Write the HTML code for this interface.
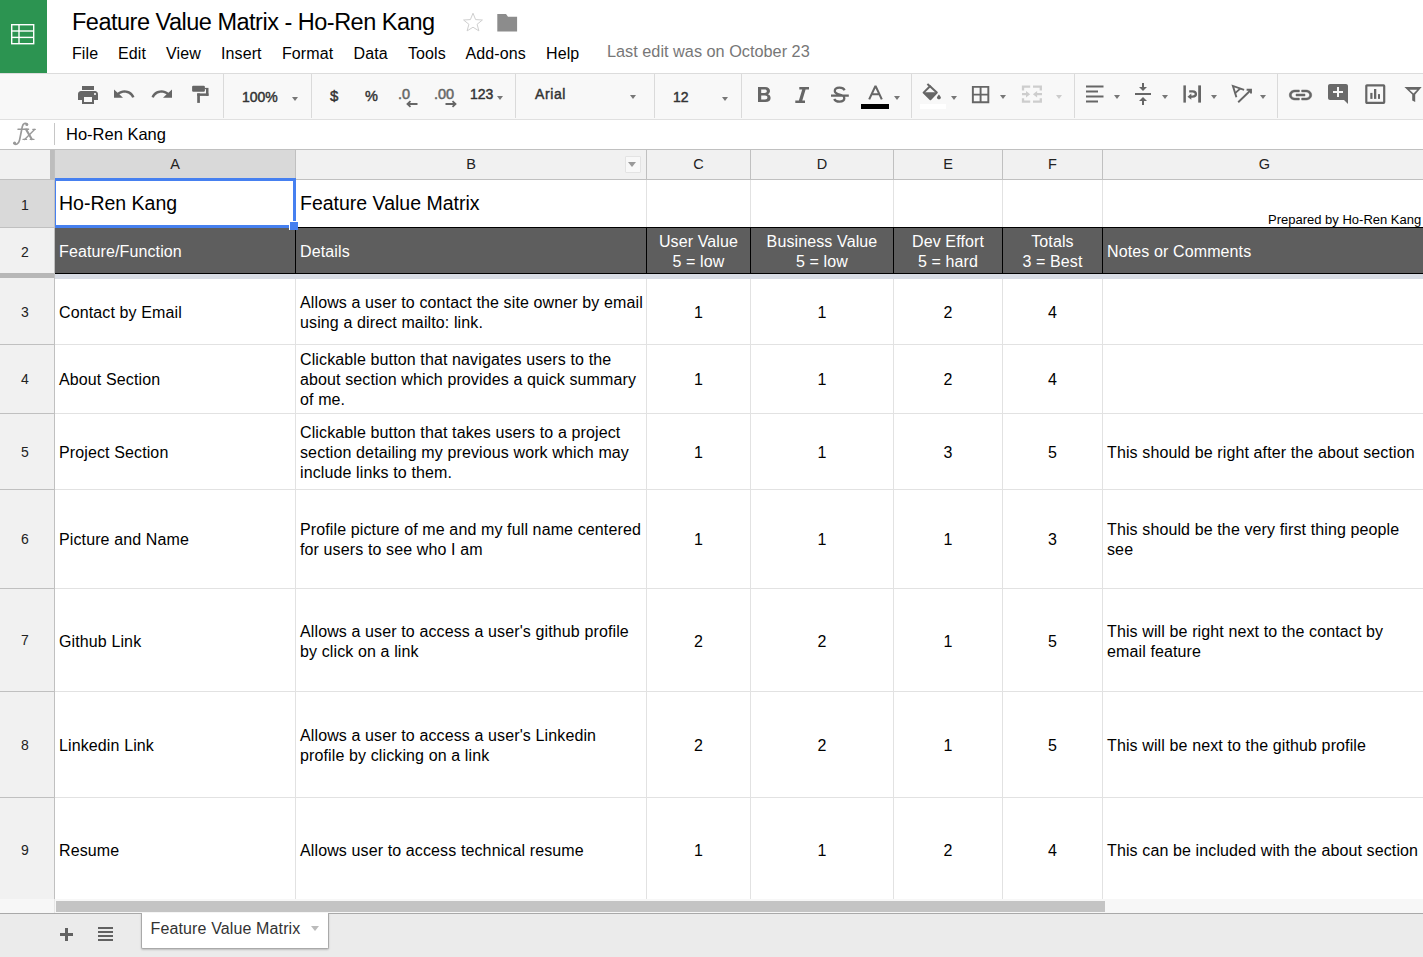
<!DOCTYPE html>
<html><head><meta charset="utf-8">
<style>
*{box-sizing:border-box;margin:0;padding:0}
html,body{width:1423px;height:957px;overflow:hidden;background:#fff;font-family:"Liberation Sans",sans-serif;color:#000}
.a{position:absolute;white-space:nowrap}
svg{position:absolute;overflow:visible}
#logo{left:0;top:0;width:47px;height:73px;background:#2c9451}
#title{left:72px;top:7px;font-size:23.5px;line-height:30px;color:#000;letter-spacing:-0.5px}
.menu{top:44px;letter-spacing:0.1px;font-size:16px;line-height:20px;color:#000}
#lastedit{left:607px;top:41px;font-size:16.3px;line-height:20px;color:#777}
#toolbar{left:0;top:73px;width:1423px;height:47px;background:#f8f8f8;border-top:1px solid #dcdcdc;border-bottom:1px solid #e0e0e0}
.sep{top:74px;width:1px;height:44px;background:#dadada}
.tt{font-size:14px;font-weight:normal;-webkit-text-stroke:0.45px #333;color:#333;line-height:16px}
.tr{font-size:14.5px;color:#666;line-height:16px;font-weight:bold}
.dd{position:absolute;width:0;height:0;border-left:3.5px solid transparent;border-right:3.5px solid transparent;border-top:4px solid #777}
#fbar{left:0;top:120px;width:1423px;height:30px;background:#fff;border-bottom:1px solid #c0c0c0}
.hdr{background:#f1f1f1}
.ch{font-size:14.5px;line-height:16px;color:#222;text-align:center}
.rh{font-size:14px;line-height:16px;color:#222;text-align:center}
.c{position:absolute;display:flex;align-items:center;font-size:16px;line-height:20px;white-space:nowrap;padding-left:4px;padding-top:2px;overflow:hidden;letter-spacing:0.12px}
.cc{justify-content:center;text-align:center;padding-left:0}
.dk{color:#fff}
.hl{position:absolute;height:1px}
.vl{position:absolute;width:1px}
</style></head><body>
<div class="a" id="logo"><svg width="47" height="73" style="left:0;top:0"><g fill="none" stroke="#fff" stroke-width="1.4"><rect x="11.7" y="24.7" width="22" height="19"/><line x1="19" y1="24.7" x2="19" y2="43.7"/><line x1="11.7" y1="31" x2="33.7" y2="31"/><line x1="11.7" y1="37.4" x2="33.7" y2="37.4"/></g></svg></div>
<div class="a" id="title">Feature Value Matrix - Ho-Ren Kang</div>
<svg style="left:462px;top:12px" width="22" height="21" viewBox="0 0 22 21"><path d="M11 1.2 L13.6 7.6 L20.4 8 L15.1 12.3 L16.9 18.9 L11 15.2 L5.1 18.9 L6.9 12.3 L1.6 8 L8.4 7.6 Z" fill="none" stroke="#cfcfcf" stroke-width="1"/></svg>
<svg style="left:497px;top:14px" width="21" height="18" viewBox="0 0 21 18"><path d="M0.3 0 H9 L11 2.7 H20.1 V17.6 H0.3 Z" fill="#8c8c8c"/></svg>
<div class="a menu" style="left:72px">File</div>
<div class="a menu" style="left:118px">Edit</div>
<div class="a menu" style="left:166px">View</div>
<div class="a menu" style="left:221px">Insert</div>
<div class="a menu" style="left:282px">Format</div>
<div class="a menu" style="left:353.5px">Data</div>
<div class="a menu" style="left:408px">Tools</div>
<div class="a menu" style="left:465.5px">Add-ons</div>
<div class="a menu" style="left:546px">Help</div>
<div class="a" id="lastedit">Last edit was on October 23</div>
<div class="a" id="toolbar"></div>
<div class="a sep" style="left:223px"></div>
<div class="a sep" style="left:311px"></div>
<div class="a sep" style="left:515px"></div>
<div class="a sep" style="left:654px"></div>
<div class="a sep" style="left:741px"></div>
<div class="a sep" style="left:911px"></div>
<div class="a sep" style="left:1074px"></div>
<div class="a sep" style="left:1277px"></div>
<!-- print -->
<svg style="left:76px;top:83px" width="24" height="24" viewBox="0 0 24 24"><path fill="#666" d="M19 8H5c-1.66 0-3 1.34-3 3v6h4v4h12v-4h4v-6c0-1.66-1.34-3-3-3zm-3 11H8v-5h8v5zm3-7c-.55 0-1-.45-1-1s.45-1 1-1 1 .45 1 1-.45 1-1 1zm-1-9H6v4h12V3z"/></svg>
<!-- undo -->
<svg style="left:112px;top:83px" width="24" height="22" viewBox="0 0 24 24" preserveAspectRatio="none"><path fill="#666" d="M12.5 8c-2.65 0-5.05.99-6.9 2.6L2 7v9h9l-3.62-3.62c1.39-1.16 3.16-1.88 5.12-1.88 3.54 0 6.55 2.31 7.6 5.5l2.37-.78C21.08 11.03 17.15 8 12.5 8z"/></svg>
<!-- redo -->
<svg style="left:150px;top:83px" width="24" height="22" viewBox="0 0 24 24" preserveAspectRatio="none"><path fill="#666" d="M18.4 10.6C16.55 8.99 14.15 8 11.5 8c-4.65 0-8.58 3.03-9.96 7.22L3.9 16c1.05-3.19 4.05-5.5 7.6-5.5 1.95 0 3.73.72 5.12 1.88L13 16h9V7l-3.6 3.6z"/></svg>
<!-- paint format -->
<svg style="left:188px;top:84px" width="24" height="22" viewBox="0 0 24 22"><g fill="#666"><rect x="4.1" y="1.7" width="12.8" height="6" rx="1.2"/><rect x="16.4" y="3.9" width="2" height="1.3"/><rect x="18" y="3.9" width="2.5" height="7.9"/><rect x="9.2" y="9.4" width="11.3" height="2.5"/><rect x="9.2" y="9.4" width="2.7" height="9.5"/></g></svg>
<div class="a tt" style="left:242px;top:89px">100%</div>
<div class="dd" style="left:292px;top:97px"></div>
<div class="a tt" style="left:330px;top:88px;font-size:15px">$</div>
<div class="a tt" style="left:365px;top:88px;font-size:14.5px">%</div>
<!-- .0 with left arrow -->
<div class="a tr" style="left:398px;top:86px;font-weight:normal;-webkit-text-stroke:0.5px #666">.0</div>
<svg style="left:405px;top:100px" width="14" height="8" viewBox="0 0 14 8"><path d="M12.5 4H3 M5.5 1.2 L2.5 4 L5.5 6.8" fill="none" stroke="#666" stroke-width="1.8"/></svg>
<div class="a tr" style="left:434px;top:86px;font-weight:normal;-webkit-text-stroke:0.5px #666">.00</div>
<svg style="left:444px;top:100px" width="14" height="8" viewBox="0 0 14 8"><path d="M1.5 4H11 M8.5 1.2 L11.5 4 L8.5 6.8" fill="none" stroke="#666" stroke-width="1.8"/></svg>
<div class="a tt" style="left:470px;top:86px">123</div>
<div class="dd" style="left:497px;top:96px"></div>
<div class="a tt" style="left:535px;top:86px;letter-spacing:0.6px">Arial</div>
<div class="dd" style="left:630px;top:95px"></div>
<div class="a tt" style="left:673px;top:89px">12</div>
<div class="dd" style="left:722px;top:97px"></div>
<!-- B I S -->
<svg style="left:758px;top:87px" width="13" height="15" viewBox="0 0 13 15"><path fill="#666" fill-rule="evenodd" d="M0 0H7C10.5 0 12 1.8 12 4 12 5.6 11 6.7 9.8 7.2 11.5 7.7 12.6 9 12.6 10.9 12.6 13.4 10.8 15 7.5 15H0Z M3.2 2.6V6H6.6C8 6 8.8 5.4 8.8 4.3 8.8 3.2 8 2.6 6.6 2.6Z M3.2 8.6V12.4H7C8.5 12.4 9.4 11.7 9.4 10.5 9.4 9.3 8.5 8.6 7 8.6Z"/></svg>
<svg style="left:794px;top:87px" width="16" height="16" viewBox="0 0 16 16"><path fill="#666" d="M5.3 0H15V2.6H11.6L8.3 13.4H11V16H1.3V13.4H4.9L8.2 2.6H5.3Z"/></svg>
<svg style="left:830px;top:86px" width="19" height="17" viewBox="0 0 19 17"><path fill="none" stroke="#666" stroke-width="2.3" d="M14.6 4.2C13.8 2.5 12 1.6 9.5 1.6 6.7 1.6 4.8 2.9 4.8 5 4.8 7.2 7 7.9 9.6 8.5 12.3 9.1 14.3 10 14.3 12.3 14.3 14.4 12.3 15.6 9.5 15.6 6.9 15.6 5 14.6 4.2 12.9 M1 9.6H18.8"/></svg>
<!-- text color A -->
<svg style="left:868px;top:84.5px" width="15" height="15" viewBox="0 0 15 15"><path fill="none" stroke="#666" stroke-width="2.1" stroke-linejoin="bevel" d="M1.2 14.4L7.5 0.9 13.8 14.4 M3.8 9.2H11.2"/></svg>
<div class="a" style="left:861px;top:104px;width:28px;height:5px;background:#000"></div>
<div class="dd" style="left:894px;top:96px"></div>
<!-- fill color -->
<svg style="left:920px;top:82px" width="24" height="20" viewBox="0 0 24 20"><path d="M3.6 10.6 L10 4.2 L16.8 10.6 L10.4 17.2 Z" fill="none" stroke="#666" stroke-width="2" stroke-linejoin="round"/><path d="M3.4 10.2 H17 L10.4 17.6 Z" fill="#666"/><path d="M7.4 1.9 L10.8 5" stroke="#666" stroke-width="2"/><path d="M18.9 12.4C18.9 12.4 16.9 14.6 16.9 15.5 16.9 16.6 17.8 17.3 18.9 17.3 20 17.3 20.9 16.6 20.9 15.5 20.9 14.6 18.9 12.4 18.9 12.4Z" fill="#666"/></svg>
<div class="a" style="left:920px;top:104px;width:26px;height:5px;background:#fff"></div>
<div class="dd" style="left:951px;top:96px"></div>
<!-- borders -->
<svg style="left:969.1px;top:83.1px" width="23.2" height="23.2" viewBox="0 0 24 24"><path fill="#666" d="M3 3v18h18V3H3zm8 16H5v-6h6v6zm0-8H5V5h6v6zm8 8h-6v-6h6v6zm0-8h-6V5h6v6z"/></svg>
<div class="dd" style="left:1000px;top:95px"></div>
<!-- merge disabled -->
<svg style="left:1021px;top:85px" width="22" height="19" viewBox="0 0 22 19"><g fill="none" stroke="#cdcdcd" stroke-width="2.3"><path d="M2 5.5V1.7H9.2 M12 1.7H19.8V5.5 M2 13.3V16.6H9.2 M12 16.6H19.8V13.3 M1 9.2H6 M21 9.2H16"/></g><path fill="#cdcdcd" d="M9.2 9.2 L5 6 V12.4Z M11.9 9.2 L16.1 6 V12.4Z"/></svg>
<div class="dd" style="left:1056px;top:95px;border-top-color:#ccc"></div>
<!-- align left -->
<svg style="left:1086px;top:85px" width="18" height="18" viewBox="0 0 18 18"><g fill="#666"><rect x="0" y="0.5" width="17.5" height="2"/><rect x="0" y="5.5" width="12" height="2"/><rect x="0" y="10.5" width="17.5" height="2"/><rect x="0" y="15.5" width="12" height="2"/></g></svg>
<div class="dd" style="left:1114px;top:95px"></div>
<!-- valign -->
<svg style="left:1131px;top:82px" width="24" height="24" viewBox="0 0 24 24"><path fill="#666" d="M8 19h3v4h2v-4h3l-4-4-4 4zm8-14h-3V1h-2v4H8l4 4 4-4zM4 11v2h16v-2H4z"/></svg>
<div class="dd" style="left:1162px;top:95px"></div>
<!-- wrap -->
<svg style="left:1183px;top:85px" width="19" height="19" viewBox="0 0 19 19"><g fill="#666"><rect x="0.4" y="0.4" width="2.5" height="17.2"/><rect x="15.2" y="0.4" width="2.8" height="17.2"/></g><path d="M6.2 6.4H9.6C11.5 6.4 12.9 7.5 12.9 9.1 12.9 10.6 11.5 11.7 9.6 11.7H7.5" fill="none" stroke="#666" stroke-width="2.3"/><path fill="#666" d="M4.5 11.7 L8.3 8.6 V14.8Z"/></svg>
<div class="dd" style="left:1211px;top:95px"></div>
<!-- rotate -->
<svg style="left:1232px;top:85px" width="20" height="19" viewBox="0 0 20 19"><g fill="none" stroke="#666" stroke-width="1.9"><path d="M4.4 12.3 L0.9 0.9 L12.1 4.8"/><path d="M2.9 8.4 L8.5 3.4"/><path d="M6.2 17.2 L18.6 5.3 M14.6 4.7 H19 V8.6"/></g></svg>
<div class="dd" style="left:1260px;top:95px"></div>
<!-- link -->
<svg style="left:1287px;top:82.8px" width="27" height="24" viewBox="0 0 24 24" preserveAspectRatio="none"><path fill="#666" stroke="#666" stroke-width="0.45" d="M3.9 12c0-1.71 1.39-3.1 3.1-3.1h4V7H7c-2.76 0-5 2.24-5 5s2.24 5 5 5h4v-1.9H7c-1.71 0-3.1-1.39-3.1-3.1zM8 13h8v-2H8v2zm9-6h-4v1.9h4c1.71 0 3.1 1.39 3.1 3.1s-1.39 3.1-3.1 3.1h-4V17h4c2.76 0 5-2.24 5-5s-2.24-5-5-5z"/></svg>
<!-- add comment -->
<svg style="left:1326px;top:82.3px" width="24" height="24" viewBox="0 0 24 24"><path fill="#6a6a6a" d="M21.99 4c0-1.1-.89-2-1.99-2H4c-1.1 0-2 .9-2 2v12c0 1.1.9 2 2 2h14l4 4-.01-18zM17 11h-4v4h-2v-4H7V9h4V5h2v4h4v2z"/></svg>
<!-- chart -->
<svg style="left:1364px;top:83px" width="23" height="23" viewBox="0 0 23 23"><rect x="2.3" y="2.3" width="17.9" height="17.5" rx="0.6" fill="none" stroke="#666" stroke-width="2.2"/><g fill="#666"><rect x="6.3" y="9.9" width="2.2" height="6"/><rect x="10" y="6" width="2.3" height="9.9"/><rect x="14" y="11.1" width="2" height="4.8"/></g></svg>
<!-- filter -->
<svg style="left:1404px;top:87px" width="22" height="16" viewBox="0 0 22 16"><path fill="#666" fill-rule="evenodd" d="M0.4 0H17.7L11.2 7.5V15.1L8.2 13.4V7.5Z M5.4 2.7H13.2L9.5 6.6Z"/></svg>
<!-- formula bar -->
<div class="a" id="fbar"></div>
<svg style="left:0;top:0" width="60" height="150"><g fill="none" stroke="#999" stroke-linecap="round"><path d="M13.8 143.3C15.5 145.3 18.6 144.6 19.6 139.8L22.3 126.6C23 123.3 25.6 122.3 27.2 124.3" stroke-width="1.7"/><path d="M18 129.3H28.5" stroke-width="1.5"/><path d="M26.2 129.6L31.8 139.2" stroke-width="2.1"/><path d="M34.6 129.6L24.6 139.4" stroke-width="1.4"/><path d="M23 139.4H26.6M30.2 139.4H34M32.8 129.4H35.3M24.6 129.4H28" stroke-width="1.2"/></g><circle cx="14.6" cy="143" r="1.5" fill="#999"/><circle cx="26.8" cy="124.6" r="1.5" fill="#999"/></svg>
<div class="a" style="left:53.5px;top:123px;width:1.5px;height:22px;background:#c6c6c6"></div>
<div class="a" style="left:66px;top:124px;font-size:16.5px;line-height:20px;color:#000">Ho-Ren Kang</div>
<div class="a" style="left:0;top:150px;width:1423px;height:29px;background:#f1f1f1"></div>
<div class="a" style="left:55px;top:150px;width:240px;height:29px;background:#d9d9d9"></div>
<div class="a" style="left:0;top:180px;width:54px;height:719px;background:#f1f1f1"></div>
<div class="a" style="left:0;top:180px;width:54px;height:47px;background:#d9d9d9"></div>
<div class="a ch" style="left:55px;top:156px;width:240px">A</div>
<div class="a ch" style="left:296px;top:156px;width:350px">B</div>
<div class="a ch" style="left:647px;top:156px;width:103px">C</div>
<div class="a ch" style="left:751px;top:156px;width:142px">D</div>
<div class="a ch" style="left:894px;top:156px;width:108px">E</div>
<div class="a ch" style="left:1003px;top:156px;width:99px">F</div>
<div class="a ch" style="left:1103px;top:156px;width:323px">G</div>
<div class="a" style="left:295px;top:150px;width:1px;height:29px;background:#c0c0c0"></div>
<div class="a" style="left:646px;top:150px;width:1px;height:29px;background:#c0c0c0"></div>
<div class="a" style="left:750px;top:150px;width:1px;height:29px;background:#c0c0c0"></div>
<div class="a" style="left:893px;top:150px;width:1px;height:29px;background:#c0c0c0"></div>
<div class="a" style="left:1002px;top:150px;width:1px;height:29px;background:#c0c0c0"></div>
<div class="a" style="left:1102px;top:150px;width:1px;height:29px;background:#c0c0c0"></div>
<div class="a" style="left:50px;top:150px;width:5px;height:29px;background:#bdbdbd"></div>
<div class="a" style="left:0;top:179px;width:1423px;height:1px;background:#c0c0c0"></div>
<div class="a" style="left:54px;top:150px;width:1px;height:749px;background:#c0c0c0"></div>
<div class="a" style="left:625px;top:156px;width:16px;height:17px;background:#f8f8f8;border:1px solid #e3e3e3;border-radius:1px"></div>
<div class="dd" style="left:628.3px;top:162px;border-left-width:4.4px;border-right-width:4.4px;border-top-width:5px;border-top-color:#999"></div>
<div class="a" style="left:295px;top:180px;width:1px;height:719px;background:#e2e2e2"></div>
<div class="a" style="left:646px;top:180px;width:1px;height:719px;background:#e2e2e2"></div>
<div class="a" style="left:750px;top:180px;width:1px;height:719px;background:#e2e2e2"></div>
<div class="a" style="left:893px;top:180px;width:1px;height:719px;background:#e2e2e2"></div>
<div class="a" style="left:1002px;top:180px;width:1px;height:719px;background:#e2e2e2"></div>
<div class="a" style="left:1102px;top:180px;width:1px;height:719px;background:#e2e2e2"></div>
<div class="a" style="left:55px;top:227px;width:1368px;height:1px;background:#e2e2e2"></div>
<div class="a" style="left:0;top:227px;width:54px;height:1px;background:#c0c0c0"></div>
<div class="a" style="left:55px;top:344px;width:1368px;height:1px;background:#e2e2e2"></div>
<div class="a" style="left:0;top:344px;width:54px;height:1px;background:#c0c0c0"></div>
<div class="a" style="left:55px;top:413px;width:1368px;height:1px;background:#e2e2e2"></div>
<div class="a" style="left:0;top:413px;width:54px;height:1px;background:#c0c0c0"></div>
<div class="a" style="left:55px;top:489px;width:1368px;height:1px;background:#e2e2e2"></div>
<div class="a" style="left:0;top:489px;width:54px;height:1px;background:#c0c0c0"></div>
<div class="a" style="left:55px;top:588px;width:1368px;height:1px;background:#e2e2e2"></div>
<div class="a" style="left:0;top:588px;width:54px;height:1px;background:#c0c0c0"></div>
<div class="a" style="left:55px;top:691px;width:1368px;height:1px;background:#e2e2e2"></div>
<div class="a" style="left:0;top:691px;width:54px;height:1px;background:#c0c0c0"></div>
<div class="a" style="left:55px;top:797px;width:1368px;height:1px;background:#e2e2e2"></div>
<div class="a" style="left:0;top:797px;width:54px;height:1px;background:#c0c0c0"></div>
<div class="a" style="left:55px;top:227px;width:1368px;height:47px;background:#5e5e5e;border-top:1px solid #000;border-bottom:1px solid #000"></div>
<div class="a" style="left:295px;top:227px;width:1px;height:47px;background:#000"></div>
<div class="a" style="left:646px;top:227px;width:1px;height:47px;background:#000"></div>
<div class="a" style="left:750px;top:227px;width:1px;height:47px;background:#000"></div>
<div class="a" style="left:893px;top:227px;width:1px;height:47px;background:#000"></div>
<div class="a" style="left:1002px;top:227px;width:1px;height:47px;background:#000"></div>
<div class="a" style="left:1102px;top:227px;width:1px;height:47px;background:#000"></div>
<div class="a" style="left:0;top:273px;width:54px;height:5px;background:#b7b7b7"></div>
<div class="a" style="left:55px;top:274px;width:1368px;height:5px;background:#d8dce4"></div>
<div class="a rh" style="left:0;top:180px;width:50px;height:47px;display:flex;align-items:center;justify-content:center;padding-top:2px">1</div>
<div class="a rh" style="left:0;top:228px;width:50px;height:45px;display:flex;align-items:center;justify-content:center;padding-top:2px">2</div>
<div class="a rh" style="left:0;top:279px;width:50px;height:65px;display:flex;align-items:center;justify-content:center;padding-top:0px">3</div>
<div class="a rh" style="left:0;top:345px;width:50px;height:68px;display:flex;align-items:center;justify-content:center;padding-top:0px">4</div>
<div class="a rh" style="left:0;top:414px;width:50px;height:75px;display:flex;align-items:center;justify-content:center;padding-top:0px">5</div>
<div class="a rh" style="left:0;top:490px;width:50px;height:98px;display:flex;align-items:center;justify-content:center;padding-top:0px">6</div>
<div class="a rh" style="left:0;top:589px;width:50px;height:102px;display:flex;align-items:center;justify-content:center;padding-top:0px">7</div>
<div class="a rh" style="left:0;top:692px;width:50px;height:105px;display:flex;align-items:center;justify-content:center;padding-top:0px">8</div>
<div class="a rh" style="left:0;top:798px;width:50px;height:103px;display:flex;align-items:center;justify-content:center;padding-top:0px">9</div>
<div class="c" style="left:55px;top:180px;width:240px;height:47px;font-size:19.5px;line-height:24px;padding-top:0;padding-bottom:1px;letter-spacing:0">Ho-Ren Kang</div>
<div class="c" style="left:296px;top:180px;width:350px;height:47px;font-size:19.5px;line-height:24px;padding-top:0;padding-bottom:1px;letter-spacing:0">Feature Value Matrix</div>
<div class="a" style="left:1268px;top:212px;font-size:13px;line-height:16px">Prepared by Ho-Ren Kang</div>
<div class="c dk" style="left:55px;top:228px;width:240px;height:45px;">Feature/Function</div>
<div class="c dk" style="left:296px;top:228px;width:350px;height:45px;">Details</div>
<div class="c cc dk" style="left:647px;top:228px;width:103px;height:45px;">User Value<br>5 = low</div>
<div class="c cc dk" style="left:751px;top:228px;width:142px;height:45px;">Business Value<br>5 = low</div>
<div class="c cc dk" style="left:894px;top:228px;width:108px;height:45px;">Dev Effort<br>5 = hard</div>
<div class="c cc dk" style="left:1003px;top:228px;width:99px;height:45px;">Totals<br>3 = Best</div>
<div class="c dk" style="left:1103px;top:228px;width:397px;height:45px;">Notes or Comments</div>
<div class="c" style="left:55px;top:279px;width:240px;height:65px;">Contact by Email</div>
<div class="c" style="left:296px;top:279px;width:350px;height:65px;">Allows a user to contact the site owner by email<br>using a direct mailto: link.</div>
<div class="c cc" style="left:647px;top:279px;width:103px;height:65px;">1</div>
<div class="c cc" style="left:751px;top:279px;width:142px;height:65px;">1</div>
<div class="c cc" style="left:894px;top:279px;width:108px;height:65px;">2</div>
<div class="c cc" style="left:1003px;top:279px;width:99px;height:65px;">4</div>
<div class="c" style="left:1103px;top:279px;width:397px;height:65px;"></div>
<div class="c" style="left:55px;top:345px;width:240px;height:68px;">About Section</div>
<div class="c" style="left:296px;top:345px;width:350px;height:68px;">Clickable button that navigates users to the<br>about section which provides a quick summary<br>of me.</div>
<div class="c cc" style="left:647px;top:345px;width:103px;height:68px;">1</div>
<div class="c cc" style="left:751px;top:345px;width:142px;height:68px;">1</div>
<div class="c cc" style="left:894px;top:345px;width:108px;height:68px;">2</div>
<div class="c cc" style="left:1003px;top:345px;width:99px;height:68px;">4</div>
<div class="c" style="left:1103px;top:345px;width:397px;height:68px;"></div>
<div class="c" style="left:55px;top:414px;width:240px;height:75px;">Project Section</div>
<div class="c" style="left:296px;top:414px;width:350px;height:75px;">Clickable button that takes users to a project<br>section detailing my previous work which may<br>include links to them.</div>
<div class="c cc" style="left:647px;top:414px;width:103px;height:75px;">1</div>
<div class="c cc" style="left:751px;top:414px;width:142px;height:75px;">1</div>
<div class="c cc" style="left:894px;top:414px;width:108px;height:75px;">3</div>
<div class="c cc" style="left:1003px;top:414px;width:99px;height:75px;">5</div>
<div class="c" style="left:1103px;top:414px;width:397px;height:75px;">This should be right after the about section</div>
<div class="c" style="left:55px;top:490px;width:240px;height:98px;">Picture and Name</div>
<div class="c" style="left:296px;top:490px;width:350px;height:98px;">Profile picture of me and my full name centered<br>for users to see who I am</div>
<div class="c cc" style="left:647px;top:490px;width:103px;height:98px;">1</div>
<div class="c cc" style="left:751px;top:490px;width:142px;height:98px;">1</div>
<div class="c cc" style="left:894px;top:490px;width:108px;height:98px;">1</div>
<div class="c cc" style="left:1003px;top:490px;width:99px;height:98px;">3</div>
<div class="c" style="left:1103px;top:490px;width:397px;height:98px;">This should be the very first thing people<br>see</div>
<div class="c" style="left:55px;top:589px;width:240px;height:102px;padding-top:3px">Github Link</div>
<div class="c" style="left:296px;top:589px;width:350px;height:102px;padding-top:3px">Allows a user to access a user's github profile<br>by click on a link</div>
<div class="c cc" style="left:647px;top:589px;width:103px;height:102px;padding-top:3px">2</div>
<div class="c cc" style="left:751px;top:589px;width:142px;height:102px;padding-top:3px">2</div>
<div class="c cc" style="left:894px;top:589px;width:108px;height:102px;padding-top:3px">1</div>
<div class="c cc" style="left:1003px;top:589px;width:99px;height:102px;padding-top:3px">5</div>
<div class="c" style="left:1103px;top:589px;width:397px;height:102px;padding-top:3px">This will be right next to the contact by<br>email feature</div>
<div class="c" style="left:55px;top:692px;width:240px;height:105px;">Linkedin Link</div>
<div class="c" style="left:296px;top:692px;width:350px;height:105px;">Allows a user to access a user's Linkedin<br>profile by clicking on a link</div>
<div class="c cc" style="left:647px;top:692px;width:103px;height:105px;">2</div>
<div class="c cc" style="left:751px;top:692px;width:142px;height:105px;">2</div>
<div class="c cc" style="left:894px;top:692px;width:108px;height:105px;">1</div>
<div class="c cc" style="left:1003px;top:692px;width:99px;height:105px;">5</div>
<div class="c" style="left:1103px;top:692px;width:397px;height:105px;">This will be next to the github profile</div>
<div class="c" style="left:55px;top:798px;width:240px;height:103px;">Resume</div>
<div class="c" style="left:296px;top:798px;width:350px;height:103px;">Allows user to access technical resume</div>
<div class="c cc" style="left:647px;top:798px;width:103px;height:103px;">1</div>
<div class="c cc" style="left:751px;top:798px;width:142px;height:103px;">1</div>
<div class="c cc" style="left:894px;top:798px;width:108px;height:103px;">2</div>
<div class="c cc" style="left:1003px;top:798px;width:99px;height:103px;">4</div>
<div class="c" style="left:1103px;top:798px;width:397px;height:103px;">This can be included with the about section</div>
<div class="a" style="left:55px;top:178px;width:241px;height:50px;border:3px solid #4680f0;border-left-width:1px"></div>
<div class="a" style="left:289px;top:221px;width:9px;height:9px;background:#4680f0;border-left:1px solid #fff;border-top:1px solid #fff"></div>
<div class="a" style="left:0;top:899px;width:1423px;height:14px;background:#f7f7f7"></div>
<div class="a" style="left:54px;top:899px;width:1px;height:14px;background:#e6e6e6"></div>
<div class="a" style="left:56px;top:901px;width:1049px;height:11px;background:#c4c4c4"></div>
<div class="a" style="left:0;top:913px;width:1423px;height:1px;background:#a9a9a9"></div>
<div class="a" style="left:0;top:914px;width:1423px;height:43px;background:#ebebeb"></div>
<div class="a" style="left:60px;top:933px;width:13px;height:3px;background:#616161"></div>
<div class="a" style="left:65px;top:928px;width:3px;height:13px;background:#616161"></div>
<div class="a" style="left:98px;top:927px;width:15px;height:2px;background:#616161"></div>
<div class="a" style="left:98px;top:931px;width:15px;height:2px;background:#616161"></div>
<div class="a" style="left:98px;top:935px;width:15px;height:2px;background:#616161"></div>
<div class="a" style="left:98px;top:939px;width:15px;height:2px;background:#616161"></div>
<div class="a" style="left:141px;top:913px;width:188px;height:36px;background:#fff;border:1px solid #a9a9a9;border-top:none;border-radius:0 0 2px 2px;box-shadow:0 1px 2px rgba(0,0,0,.2)"></div>
<div class="a" style="left:150.5px;top:919px;font-size:16px;line-height:20px;color:#333;letter-spacing:0.13px">Feature Value Matrix</div>
<div class="dd" style="left:311px;top:925.5px;border-left-width:4.5px;border-right-width:4.5px;border-top-width:5.5px;border-top-color:#bbb"></div>
</body></html>
